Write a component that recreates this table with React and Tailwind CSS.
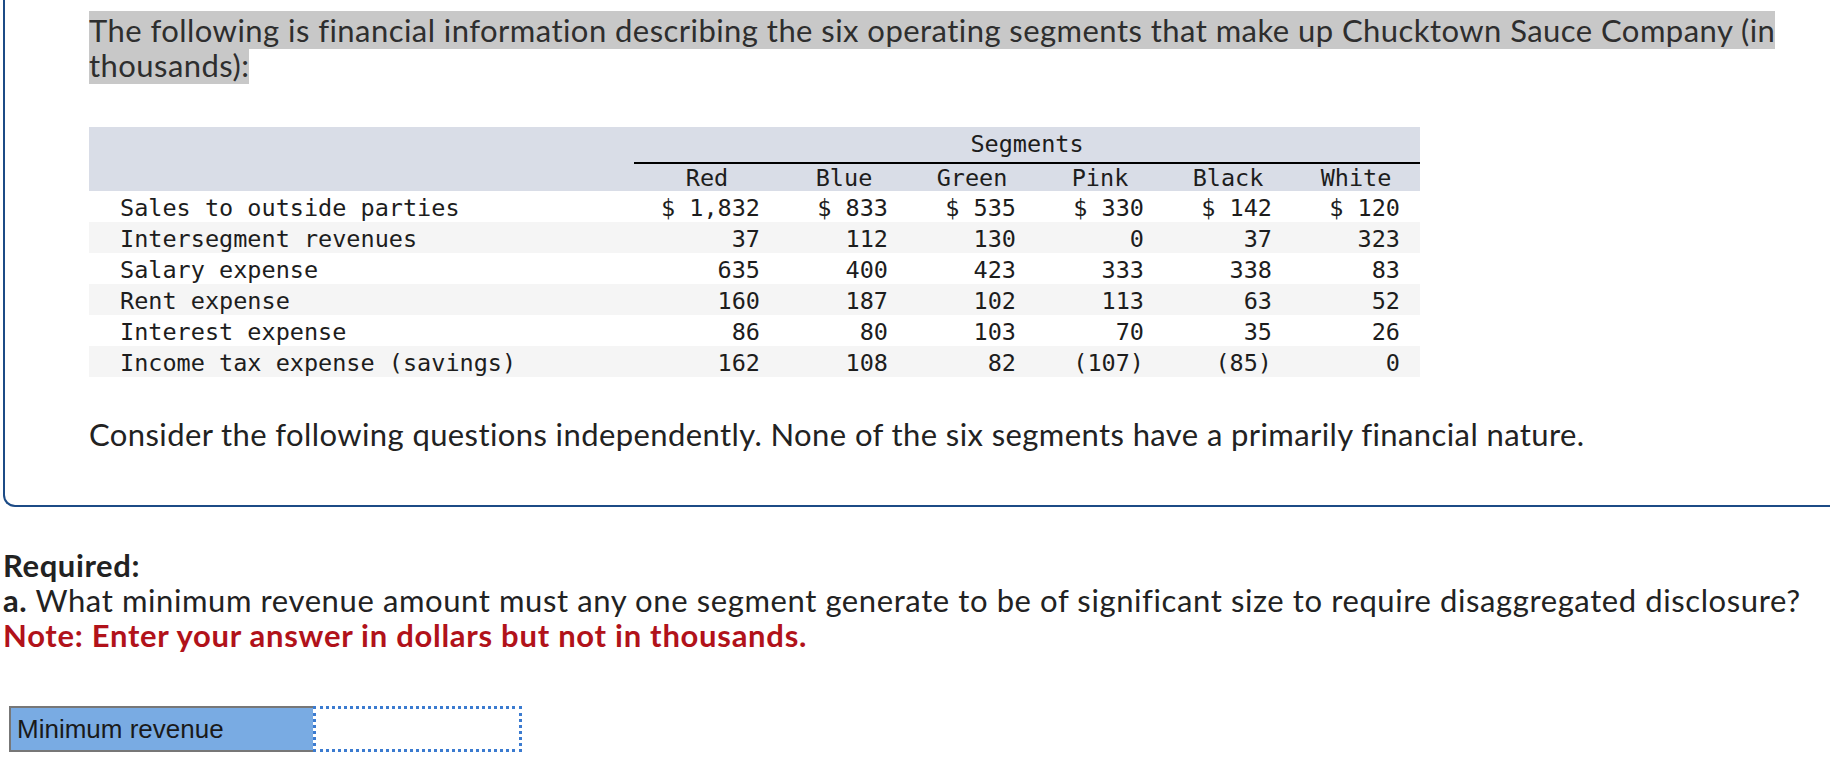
import React from 'react'

const segments = ['Red', 'Blue', 'Green', 'Pink', 'Black', 'White']

const rows = [
  { label: 'Sales to outside parties', values: ['$ 1,832', '$ 833', '$ 535', '$ 330', '$ 142', '$ 120'] },
  { label: 'Intersegment revenues', values: ['37', '112', '130', '0', '37', '323'] },
  { label: 'Salary expense', values: ['635', '400', '423', '333', '338', '83'] },
  { label: 'Rent expense', values: ['160', '187', '102', '113', '63', '52'] },
  { label: 'Interest expense', values: ['86', '80', '103', '70', '35', '26'] },
  { label: 'Income tax expense (savings)', values: ['162', '108', '82', '(107)', '(85)', '0'] },
]

const sans = "font-['Lato','Open_Sans',sans-serif]"
const mono = "font-['DejaVu_Sans_Mono','Liberation_Mono',monospace]"

function SegmentTable() {
  return (
    <div className={`mt-11 w-[1331px] text-[23.5px] tracking-normal text-[#1d1d1d] ${mono}`}>
      <div className="bg-[#d9dde7]">
        <div className="grid h-[34px] grid-cols-[545px_786px]">
          <div />
          <div className="flex items-center justify-center border-b-2 border-black">Segments</div>
        </div>
        <div className="grid h-[30px] grid-cols-[545px_146px_repeat(5,128px)]">
          <div />
          {segments.map((s) => (
            <div key={s} className="flex items-center justify-center">
              {s}
            </div>
          ))}
        </div>
      </div>
      {rows.map((row, i) => (
        <div
          key={row.label}
          className={`grid h-[31px] grid-cols-[545px_146px_repeat(5,128px)] ${i % 2 === 1 ? 'bg-[#f5f5f5]' : 'bg-white'}`}
        >
          <div className="flex items-center whitespace-pre pl-[31px]">{row.label}</div>
          {row.values.map((v, j) => (
            <div key={j} className="flex items-center justify-end whitespace-pre pr-5">
              {v}
            </div>
          ))}
        </div>
      ))}
    </div>
  )
}

export default function App() {
  return (
    <div className={`h-[778px] w-[1830px] overflow-hidden bg-white ${sans}`}>
      <div className="ml-[3px] rounded-bl-[12px] border-b-2 border-l-2 border-[#1c4b86] pb-[53px] pl-[84px] pt-[13px]">
        <p className="w-[1720px] text-[31px] leading-[35px] tracking-[0.45px] text-[#2e2e2e]">
          <span className="bg-[#c8c8c8]">
            The following is financial information describing the six operating segments that make up Chucktown Sauce
            Company (in thousands):
          </span>
        </p>

        <SegmentTable />

        <p className="mt-10 text-[31px] leading-[35px] tracking-[0.4px] text-[#222]">
          Consider the following questions independently. None of the six segments have a primarily financial nature.
        </p>
      </div>

      <div className="mt-[41px] pl-[3px] text-[31px] leading-[35px] tracking-[0.6px] text-[#222]">
        <p className="font-bold">Required:</p>
        <p>
          <span className="font-bold">a.</span> What minimum revenue amount must any one segment generate to be of
          significant size to require disaggregated disclosure?
        </p>
        <p className="font-bold tracking-[0.72px] text-[#b1121a]">
          Note: Enter your answer in dollars but not in thousands.
        </p>
      </div>

      <div className="ml-[9px] mt-[53px] flex h-[46px]">
        <div className="flex w-[304px] items-center border-2 border-r-0 border-[#777] bg-[#79abe3] pl-[6px] font-['Liberation_Sans',Arial,sans-serif] text-[26px] text-[#1a1a1a]">
          Minimum revenue
        </div>
        <input
          type="text"
          className="h-[46px] w-[209px] border-[3px] border-dotted border-[#3b7bd0] bg-white px-2 text-[24px] outline-none"
        />
      </div>
    </div>
  )
}
